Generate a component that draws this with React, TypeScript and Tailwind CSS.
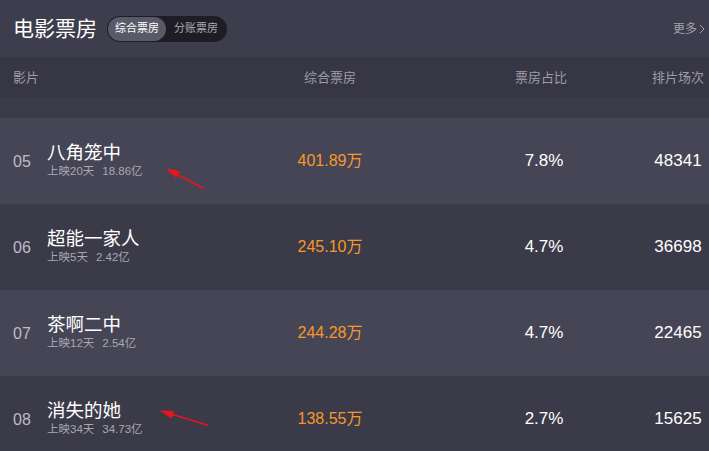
import React from "react";

const rows = [
  { rank: "05", name: "八角笼中", days: "上映20天", total: "18.86亿", box: "401.89万", pct: "7.8%", shows: "48341" },
  { rank: "06", name: "超能一家人", days: "上映5天", total: "2.42亿", box: "245.10万", pct: "4.7%", shows: "36698" },
  { rank: "07", name: "茶啊二中", days: "上映12天", total: "2.54亿", box: "244.28万", pct: "4.7%", shows: "22465" },
  { rank: "08", name: "消失的她", days: "上映34天", total: "34.73亿", box: "138.55万", pct: "2.7%", shows: "15625" },
];

export default function App() {
  return (
    <div className="relative w-[709px] h-[451px] overflow-hidden bg-[#3e3d4d] font-['Liberation_Sans','Noto_Sans_CJK_SC',sans-serif]">
      {/* Top header */}
      <div className="h-[57px] flex items-center pl-[13px] pr-[4px]">
        <div className="text-[21px] leading-none text-white">电影票房</div>
        <div className="ml-[10px] h-[26px] rounded-full bg-[#1e1d26] p-[1px] flex items-center">
          <div className="h-[24px] px-[7px] rounded-full bg-[#5a5967] flex items-center text-[11px] text-white">综合票房</div>
          <div className="h-[24px] px-[8px] flex items-center text-[11px] text-[#a9a9b3]">分账票房</div>
        </div>
        <div className="ml-auto flex items-center text-[12px] text-[#a3a3ad]">
          更多
          <svg width="6" height="10" viewBox="0 0 6 10" className="ml-[2px]">
            <path d="M1 1 L5 5 L1 9" fill="none" stroke="#a3a3ad" strokeWidth="1" />
          </svg>
        </div>
      </div>

      {/* Column header */}
      <div className="h-[41px] bg-[#373644] flex items-center text-[13px] text-[#9d9da7] pt-[1px]">
        <div className="w-[262px] pl-[13px]">影片</div>
        <div className="w-[136px] text-center">综合票房</div>
        <div className="ml-[81px] w-[124px] text-center">票房占比</div>
        <div className="ml-[44px] w-[62px] text-center">排片场次</div>
      </div>
      <div className="h-[20px] bg-[#3c3b4a]" />

      {rows.map((r, i) => (
        <div
          key={r.rank}
          className={`h-[86px] flex items-center ${i % 2 === 0 ? "bg-[#464556]" : "bg-[#3b3a49]"}`}
        >
          <div className="w-[262px] flex items-center">
            <div className="w-[47px] pl-[13px] pt-[2px] text-[16px] text-[#bdbdc6]">{r.rank}</div>
            <div className="flex flex-col -mt-[2px]">
              <div className="text-[18.5px] leading-[22px] text-white">{r.name}</div>
              <div className="text-[11.5px] leading-[14px] text-[#a8a8b2] flex">
                <span>{r.days}</span>
                <span className="ml-[8px]">{r.total}</span>
              </div>
            </div>
          </div>
          <div className="w-[136px] text-center text-[16px] text-[#f5982a]">{r.box}</div>
          <div className="ml-[84px] w-[124px] text-center text-[17px] text-white">{r.pct}</div>
          <div className="ml-[41px] w-[62px] text-center text-[17px] text-white">{r.shows}</div>
        </div>
      ))}

      {/* Red annotation arrows */}
      <svg className="absolute inset-0 pointer-events-none" width="709" height="451">
        <defs>
          <filter id="soft" x="-20%" y="-20%" width="140%" height="140%">
            <feGaussianBlur stdDeviation="0.6" />
          </filter>
        </defs>
        <g filter="url(#soft)" fill="#e8141a" stroke="#e8141a">
          <line x1="203" y1="188" x2="174" y2="173" strokeWidth="1.8" strokeLinecap="round" />
          <polygon points="167,169 176,177.5 179.5,171.5" strokeWidth="1" />
          <line x1="207" y1="425" x2="168" y2="413" strokeWidth="1.8" strokeLinecap="round" />
          <polygon points="161,411 171.5,418 173.5,411.5" strokeWidth="1" />
        </g>
      </svg>
    </div>
  );
}
